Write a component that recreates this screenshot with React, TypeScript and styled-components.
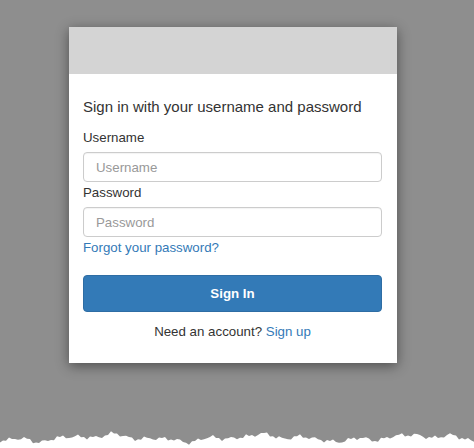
import React from 'react';
import styled, { createGlobalStyle } from 'styled-components';

const GlobalStyle = createGlobalStyle`
  html, body {
    margin: 0;
    padding: 0;
    background: #8e8e8e;
  }
  * {
    box-sizing: border-box;
  }
`;

const Page = styled.div`
  width: 474px;
  height: 448px;
  background: #8e8e8e;
  display: flex;
  flex-direction: column;
  overflow: hidden;
  font-family: 'Liberation Sans', Arial, sans-serif;
  color: #333;
`;

const Card = styled.div`
  width: 328px;
  margin: 27px 0 0 69px;
  background: #fff;
  box-shadow: 0 3px 12px rgba(0, 0, 0, 0.45);
  display: flex;
  flex-direction: column;
`;

const Banner = styled.div`
  height: 47px;
  background: #d4d4d4;
`;

const Body = styled.form`
  padding: 22px 15px 21px 14px;
  display: flex;
  flex-direction: column;
`;

const Heading = styled.h2`
  margin: 0 0 10px;
  font-size: 15px;
  line-height: 22px;
  font-weight: 400;
  color: #333;
`;

const Label = styled.label`
  display: block;
  font-size: 13.3px;
  line-height: 20px;
  color: #333;
  margin-bottom: 4px;
`;

const Input = styled.input`
  display: block;
  width: 100%;
  height: 30px;
  margin: 0 0 1px;
  padding: 0 12px;
  border: 1px solid #ccc;
  border-radius: 4px;
  font-family: inherit;
  font-size: 13.3px;
  color: #555;
  background: #fff;
  box-shadow: inset 0 1px 1px rgba(0, 0, 0, 0.05);

  &::placeholder {
    color: #999;
  }
`;

const Link = styled.a<{ $inline?: boolean }>`
  font-size: 13.3px;
  line-height: 20px;
  color: #337ab7;
  text-decoration: none;
  display: ${p => (p.$inline ? 'inline' : 'block')};
  cursor: pointer;
`;

const Button = styled.button`
  margin-top: 17px;
  height: 37px;
  width: 100%;
  border: 1px solid #2e6da4;
  border-radius: 4px;
  background: #337ab7;
  color: #fff;
  font-family: inherit;
  font-size: 13.3px;
  font-weight: 700;
  cursor: pointer;
`;

const Footer = styled.p`
  margin: 10px 0 0;
  font-size: 13.3px;
  line-height: 20px;
  text-align: center;
  color: #333;
`;

const TornEdge = styled.svg`
  display: block;
  margin-top: auto;
  flex-shrink: 0;
`;

// jagged torn-paper line along the bottom
const tornPoints = (() => {
  const pts: string[] = ['0,20'];
  for (let x = 0; x <= 474; x += 3) {
    const y =
      10 +
      2.4 * Math.sin(x * 0.04 + 0.5) +
      1.6 * Math.sin(x * 0.13 + 2.4) +
      1.4 * Math.sin(x * 0.37 + 1.2) +
      1.0 * Math.sin(x * 0.93 + 2.1) +
      0.7 * Math.sin(x * 2.3);
    pts.push(`${x},${y.toFixed(1)}`);
  }
  pts.push('474,20');
  return pts.join(' ');
})();

export default function App() {
  return (
    <>
      <GlobalStyle />
      <Page>
        <Card>
          <Banner />
          <Body onSubmit={e => e.preventDefault()}>
            <Heading>Sign in with your username and password</Heading>
            <Label htmlFor="username">Username</Label>
            <Input id="username" type="text" placeholder="Username" />
            <Label htmlFor="password">Password</Label>
            <Input id="password" type="password" placeholder="Password" />
            <Link>Forgot your password?</Link>
            <Button type="submit">Sign In</Button>
            <Footer>
              Need an account? <Link $inline>Sign up</Link>
            </Footer>
          </Body>
        </Card>
        <TornEdge width="474" height="20" viewBox="0 0 474 20">
          <polygon points={tornPoints} fill="#ffffff" />
        </TornEdge>
      </Page>
    </>
  );
}
